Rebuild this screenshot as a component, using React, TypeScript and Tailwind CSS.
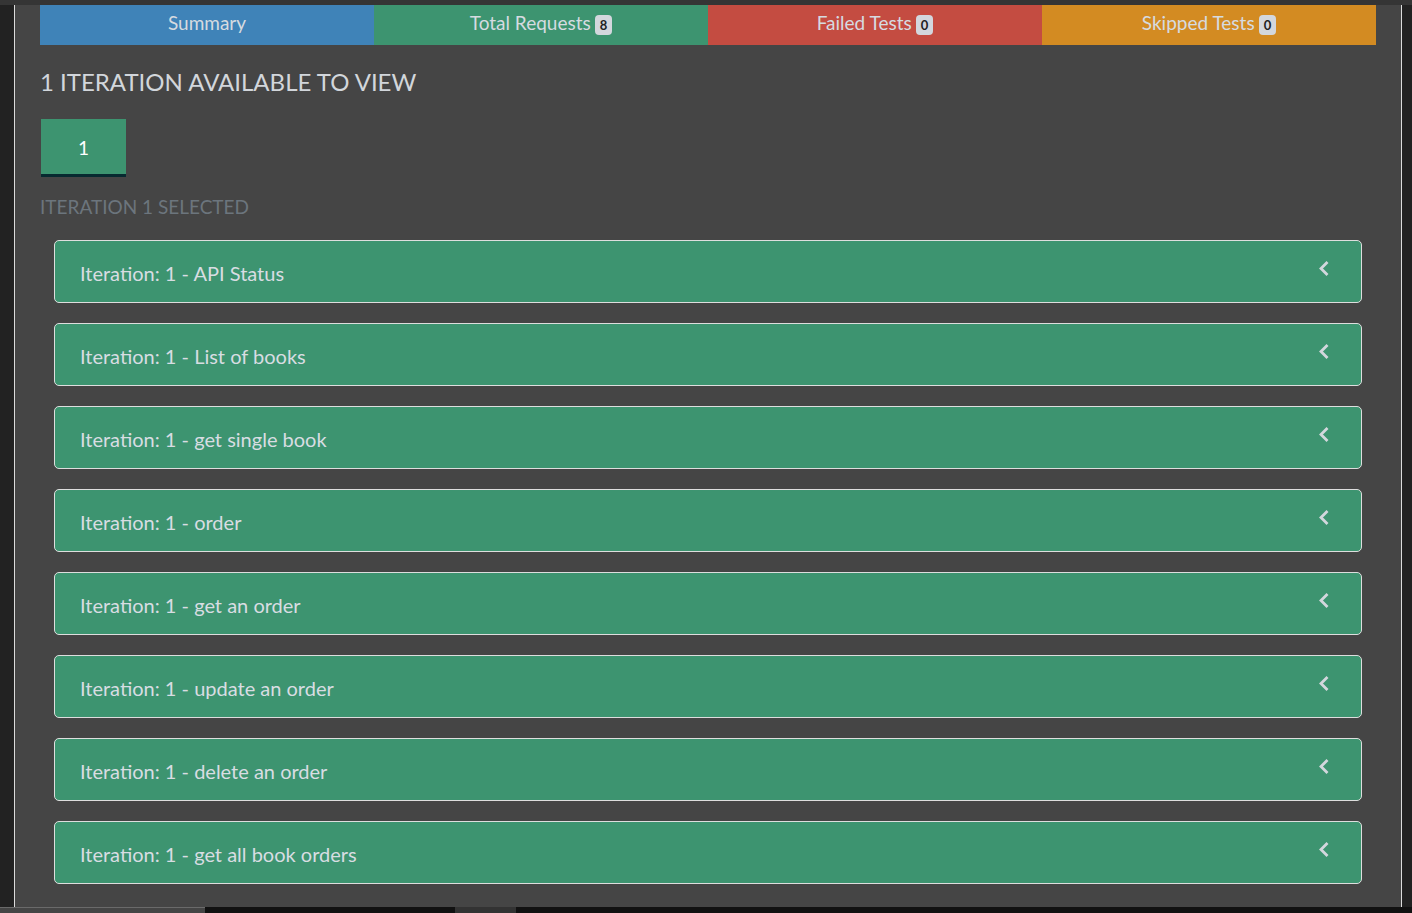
const tabs = [
  { label: "Summary", badge: null, color: "bg-[#3f83b8]" },
  { label: "Total Requests", badge: "8", color: "bg-[#3d9470]" },
  { label: "Failed Tests", badge: "0", color: "bg-[#c44c41]" },
  { label: "Skipped Tests", badge: "0", color: "bg-[#d38b22]" },
];

const requests = [
  "API Status",
  "List of books",
  "get single book",
  "order",
  "get an order",
  "update an order",
  "delete an order",
  "get all book orders",
];

function Chevron() {
  return (
    <svg width="12" height="18" viewBox="0 0 12 18" className="-mt-[5px]">
      <path d="M9.5 2 L3 8.5 L9.5 15" fill="none" stroke="#d3d7dd" strokeWidth="2.8" />
    </svg>
  );
}

export default function App() {
  return (
    <div className="h-[913px] w-[1412px] overflow-hidden bg-[#222222] font-['Lato',sans-serif] flex flex-col">
      <div className="h-[5px] bg-[#353535] shrink-0" />
      <div className="flex flex-1 min-h-0">
        <div className="w-[14px] bg-[#222222]" />
        <div className="w-[1px] bg-[#dcdcdc]" />

        {/* main panel */}
        <div className="flex-1 bg-[#454545] pl-[25px] pr-[25px]">
          {/* Tabs */}
          <div className="grid grid-cols-4 h-[40px]">
            {tabs.map((t) => (
              <div
                key={t.label}
                className={`${t.color} flex items-center justify-center gap-[4px] text-[19px] text-[#d6dbe0] pb-[3px]`}
              >
                <span>{t.label}</span>
                {t.badge && (
                  <span className="bg-[#d3d7dd] text-[#222] text-[13px] font-bold rounded-[4px] px-[5px] leading-[20px] mt-[2px]">
                    {t.badge}
                  </span>
                )}
              </div>
            ))}
          </div>

          <h2 className="mt-[20px] text-[24px] leading-[34px] text-[#d2d6db]">
            1 ITERATION AVAILABLE TO VIEW
          </h2>

          <div className="mt-[20px] ml-[1px] w-[85px] h-[58px] pt-[4px] bg-[#3d9470] border-b-[3px] border-[#072a30] flex items-center justify-center text-white text-[19px]">
            1
          </div>

          <div className="mt-[17px] text-[19px] leading-[26px] text-[#6c757d]">
            ITERATION 1 SELECTED
          </div>

          <div className="mt-[20px] ml-[14px] mr-[14px] flex flex-col gap-[20px]">
            {requests.map((r) => (
              <div
                key={r}
                className="h-[63px] rounded-[5px] border border-[#dedede] bg-[#3d9470] flex items-center justify-between pl-[25px] pr-[31px]"
              >
                <span className="text-[20px] text-[#d8dde2] mt-[3px]">
                  Iteration: 1 - {r}
                </span>
                <Chevron />
              </div>
            ))}
          </div>
        </div>

        <div className="w-[1px] bg-[#dcdcdc]" />
        <div className="w-[10px] bg-[#222222]" />
      </div>

      {/* bottom strip */}
      <div className="h-[6px] flex shrink-0">
        <div className="w-[205px] bg-[#454545] border-t border-[#6a6a6a]" />
        <div className="w-[250px] bg-[#111111]" />
        <div className="w-[61px] bg-[#333333]" />
        <div className="flex-1 bg-[#111111]" />
      </div>
    </div>
  );
}
